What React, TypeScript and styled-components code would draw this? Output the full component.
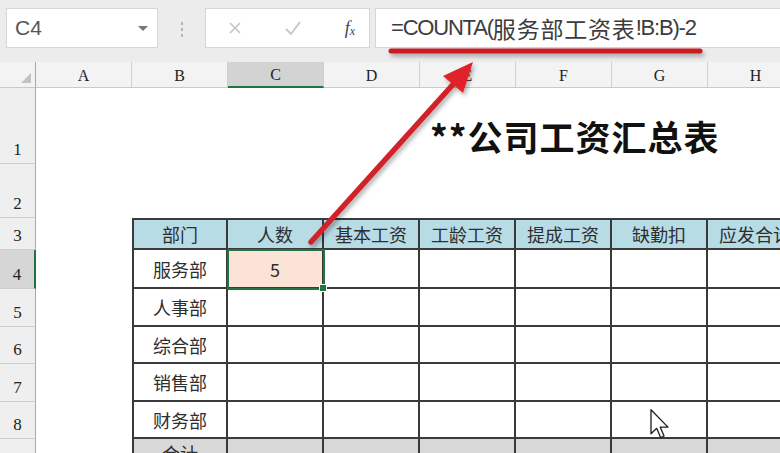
import React from 'react';
import styled, { createGlobalStyle, css } from 'styled-components';

const GlobalStyle = createGlobalStyle`
  html, body {
    margin: 0;
    padding: 0;
    background: #ffffff;
    overflow: hidden;
  }
`;

const CJK = `"Noto Sans CJK SC", "Noto Sans", sans-serif`;
const GREEN = '#217346';
const GRID_LINE = '#3a3a3a';

const Page = styled.div`
  position: relative;
  width: 780px;
  height: 453px;
  overflow: hidden;
  background: #ffffff;
`;

/* ---------- formula bar ---------- */

const Toolbar = styled.div`
  display: flex;
  align-items: flex-start;
  height: 62px;
  box-sizing: border-box;
  padding: 8px 0 0 6px;
  background: #ececec;
  font-family: "Liberation Sans", ${CJK};
`;

const Field = styled.div<{ width?: number; grow?: boolean }>`
  display: flex;
  align-items: center;
  height: 40px;
  box-sizing: border-box;
  background: #ffffff;
  border: 1px solid #d6d6d6;
  ${({ width }) => width && css`width: ${width}px;`}
  ${({ grow }) => grow && css`flex: 1;`}
`;

const NameBox = styled(Field)`
  justify-content: space-between;
  padding: 0 9px 0 8px;
  color: #555555;
  font-size: 21px;
`;

const DropCaret = styled.span`
  width: 0;
  height: 0;
  border-left: 5px solid transparent;
  border-right: 5px solid transparent;
  border-top: 5px solid #777777;
`;

const Grip = styled.div`
  display: flex;
  flex-direction: column;
  gap: 3px;
  width: 47px;
  align-items: center;
  padding-top: 14px;

  span {
    width: 2px;
    height: 3px;
    background: #b5b5b5;
  }
`;

const ButtonBox = styled(Field)`
  justify-content: space-between;
  padding: 0 14px 0 22px;
  margin-right: 5px;
`;

const FxLabel = styled.span`
  font-family: "Liberation Serif", serif;
  font-style: italic;
  font-size: 18px;
  color: #444444;

  sub {
    font-size: 12px;
    vertical-align: -1px;
  }
`;

const FormulaField = styled(Field)`
  padding-left: 15px;
  border-right: none;
  font-size: 22px;
  color: #3c3c3c;
  white-space: nowrap;
`;

const Latin = styled.span`
  letter-spacing: -1.2px;
`;

const Wide = styled.span`
  font-size: 23px;
  letter-spacing: 0.8px;
`;

/* ---------- worksheet ---------- */

const Sheet = styled.div`
  display: grid;
  grid-template-columns: 36px repeat(8, 96px);
  grid-template-rows: 26px 76px 54px 32px 39px 38px 37px 38px 37px 38px;
  font-family: ${CJK};
`;

const HeaderCell = styled.div<{ active?: boolean }>`
  display: flex;
  align-items: center;
  justify-content: center;
  box-sizing: border-box;
  background: ${({ active }) => (active ? '#d3d3d3' : '#f3f3f3')};
  border-right: 1px solid #d0d0d0;
  border-bottom: ${({ active }) => (active ? `2px solid ${GREEN}` : '1px solid #c9c9c9')};
  font-family: "Liberation Serif", serif;
  font-size: 16px;
  color: #222222;
  padding-top: 2px;
`;

const Corner = styled(HeaderCell)`
  position: relative;
  border-right: 1px solid #a8a8a8;

  &::after {
    content: '';
    position: absolute;
    right: 4px;
    bottom: 4px;
    width: 0;
    height: 0;
    border-left: 10px solid transparent;
    border-bottom: 10px solid #c2c2c2;
  }
`;

const RowHead = styled.div<{ active?: boolean }>`
  display: flex;
  align-items: flex-end;
  justify-content: center;
  box-sizing: border-box;
  padding-bottom: 3px;
  background: ${({ active }) => (active ? '#d6d6d6' : '#efefef')};
  border-bottom: 1px solid #cdcdcd;
  border-right: ${({ active }) => (active ? `2px solid ${GREEN}` : '1px solid #a8a8a8')};
  font-family: "Liberation Serif", serif;
  font-size: 17px;
  color: #222222;
`;

type CellKind = 'blank' | 'head' | 'body' | 'total';

const Cell = styled.div<{ kind: CellKind; first?: boolean; top?: boolean; selected?: boolean }>`
  position: relative;
  display: flex;
  align-items: center;
  justify-content: center;
  box-sizing: border-box;
  font-size: 18px;
  color: #2e2e2e;
  background: #ffffff;

  ${({ kind }) =>
    kind !== 'blank' &&
    css`
      border-right: 2px solid ${GRID_LINE};
      border-bottom: 2px solid ${GRID_LINE};
    `}
  ${({ kind }) => kind === 'head' && css`background: #b8dce6;`}
  ${({ kind }) =>
    kind === 'total' &&
    css`
      background: #d8d8d8;
      align-items: flex-start;
      padding-top: 1px;
    `}
  ${({ first }) => first && css`border-left: 2px solid ${GRID_LINE};`}
  ${({ top }) => top && css`border-top: 2px solid ${GRID_LINE};`}
  ${({ selected }) =>
    selected &&
    css`
      z-index: 1;
      background: #fbe4d5;
      outline: 2px solid ${GREEN};
      outline-offset: -1px;

      &::after {
        content: '';
        position: absolute;
        right: -5px;
        bottom: -5px;
        width: 6px;
        height: 6px;
        background: ${GREEN};
        border: 1px solid #ffffff;
      }
    `}
`;

const Title = styled.div`
  grid-column: span 7;
  display: flex;
  align-items: flex-end;
  padding: 0 0 3px 298px;
  font-size: 35px;
  font-weight: 700;
  color: #111111;
  white-space: nowrap;
  letter-spacing: 1px;
`;

/* ---------- annotations ---------- */

const Overlay = styled.svg`
  position: absolute;
  left: 0;
  top: 0;
  pointer-events: none;
  z-index: 5;
`;

const Pointer = styled.svg`
  position: absolute;
  left: 650px;
  top: 409px;
  z-index: 6;
`;

const columns = ['A', 'B', 'C', 'D', 'E', 'F', 'G', 'H'];
const headings = ['部门', '人数', '基本工资', '工龄工资', '提成工资', '缺勤扣', '应发合计'];
const departments = ['服务部', '人事部', '综合部', '销售部', '财务部'];

const App = () => {
  const tableRows: { label: string; kind: CellKind; values: string[] }[] = [
    { label: '3', kind: 'head', values: headings },
    ...departments.map((d, i) => ({
      label: String(i + 4),
      kind: 'body' as CellKind,
      values: [d, i === 0 ? '5' : '', '', '', '', '', ''],
    })),
    // the last row number sits below the fold
    { label: '', kind: 'total', values: ['合计', '', '', '', '', '', ''] },
  ];

  return (
    <Page>
      <GlobalStyle />
      <Toolbar>
        <NameBox width={152}>
          <span>C4</span>
          <DropCaret />
        </NameBox>
        <Grip>
          <span />
          <span />
          <span />
        </Grip>
        <ButtonBox width={165}>
          <svg width="14" height="14" viewBox="0 0 14 14">
            <path d="M2 2 L12 12 M12 2 L2 12" stroke="#c4c4c4" strokeWidth="1.6" />
          </svg>
          <svg width="18" height="16" viewBox="0 0 18 16">
            <path d="M2 9 L7 14 L16 2" stroke="#c4c4c4" strokeWidth="1.8" fill="none" />
          </svg>
          <FxLabel>
            f<sub>x</sub>
          </FxLabel>
        </ButtonBox>
        <FormulaField grow>
          <Latin>=COUNTA(</Latin>
          <Wide>服务部工资表</Wide>
          <Latin>!B:B)-2</Latin>
        </FormulaField>
      </Toolbar>

      <Sheet>
        <Corner />
        {columns.map((c) => (
          <HeaderCell key={c} active={c === 'C'}>
            {c}
          </HeaderCell>
        ))}

        <RowHead>1</RowHead>
        <Cell kind="blank" />
        <Title>**公司工资汇总表</Title>

        <RowHead>2</RowHead>
        {columns.map((c) => (
          <Cell key={c} kind="blank" />
        ))}

        {tableRows.map((row, r) => (
          <React.Fragment key={r}>
            <RowHead active={row.label === '4'}>{row.label}</RowHead>
            <Cell kind="blank" />
            {row.values.map((v, i) => (
              <Cell
                key={i}
                kind={row.kind}
                first={i === 0}
                top={row.kind === 'head'}
                selected={row.label === '4' && i === 1}
              >
                {v}
              </Cell>
            ))}
          </React.Fragment>
        ))}
      </Sheet>

      <Overlay width="780" height="453" viewBox="0 0 780 453">
        <defs>
          <filter id="shade" x="-10%" y="-10%" width="130%" height="130%">
            <feDropShadow dx="2" dy="3" stdDeviation="2" floodColor="#000000" floodOpacity="0.3" />
          </filter>
        </defs>
        <g filter="url(#shade)">
          <line x1="391" y1="51" x2="700" y2="51" stroke="#c71b22" strokeWidth="5" strokeLinecap="round" />
          <line x1="311" y1="242" x2="457" y2="80" stroke="#d1232a" strokeWidth="5.5" strokeLinecap="round" />
          <polygon points="473,62 463,93 443,76" fill="#e0242b" />
        </g>
      </Overlay>

      <Pointer width="20" height="30" viewBox="0 0 13 20">
        <path
          d="M0.5 0.5 L0.5 16.5 L4.3 12.9 L6.9 19 L9.2 18 L6.7 12.1 L11.8 12.1 Z"
          fill="#ffffff"
          stroke="#222222"
          strokeWidth="0.9"
          strokeLinejoin="round"
        />
      </Pointer>
    </Page>
  );
};

export default App;
